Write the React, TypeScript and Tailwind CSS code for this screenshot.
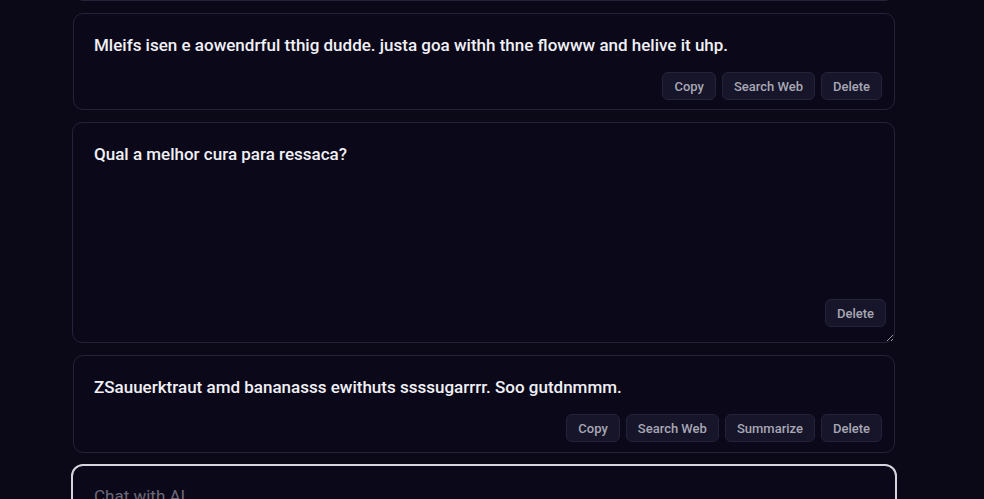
import React from 'react';

type Note = {
  text: string;
  actions: string[];
  tall?: boolean;
};

const notes: Note[] = [
  {
    text: 'Mleifs isen e aowendrful tthig dudde. justa goa withh thne flowww and helive it uhp.',
    actions: ['Copy', 'Search Web', 'Delete'],
  },
];

const ActionButton: React.FC<{ label: string }> = ({ label }) => (
  <button className="h-[28px] px-[11px] rounded-md bg-[#16152a] border border-[#252339] text-[13px] font-medium text-[#a8a7b4] leading-none">
    {label}
  </button>
);

const NoteCard: React.FC<Note> = ({ text, actions, tall }) => (
  <div
    className={
      'mx-px rounded-[10px] border border-[#25233a] bg-[#0b0919] pl-5 pr-3 pt-[17px] ' +
      (tall ? 'pb-[10px]' : 'pb-[9px]')
    }
  >
    <p className="text-[17px] font-medium leading-7 text-[#f1f0f7]">{text}</p>
    <div className="mt-[13px] flex justify-end gap-1.5">
      {actions.map((a) => (
        <ActionButton key={a} label={a} />
      ))}
    </div>
  </div>
);

export default function App() {
  return (
    <div
      className="h-[499px] w-[984px] overflow-hidden bg-[#0b0818]"
      style={{ fontFamily: 'Roboto, "Liberation Sans", sans-serif' }}
    >
      <div className="ml-[72px] w-[824px] flex flex-col gap-3 -mt-[86px]">
        {/* previous card, mostly scrolled out of view */}
        <div className="mx-px h-[87px] rounded-[10px] border border-[#25233a] bg-[#0b0919]" />

        {notes.map((n) => (
          <NoteCard key={n.text} {...n} />
        ))}

        <div className="relative">
          <textarea
            readOnly
            defaultValue="Qual a melhor cura para ressaca?"
            className="block h-[221px] w-[823px] resize-y rounded-[10px] border border-[#25233a] bg-[#0b0919] pl-[21px] pr-4 pt-[17px] text-[17px] font-medium leading-7 text-[#f1f0f7] outline-none"
          />
          <div className="absolute right-[10px] bottom-[16px]">
            <ActionButton label="Delete" />
          </div>
        </div>

        <NoteCard
          tall
          text="ZSauuerktraut amd bananasss ewithuts ssssugarrrr. Soo gutdnmmm."
          actions={['Copy', 'Search Web', 'Summarize', 'Delete']}
        />

        <div className="-mx-px -mt-px rounded-xl border-2 border-[#d6d5de] bg-[#0b0919] px-[21px] pt-[16px] pb-4">
          <input
            placeholder="Chat with AI"
            className="w-full bg-transparent text-[17px] leading-7 text-[#f1f0f7] placeholder:text-[#6b6979] outline-none"
          />
        </div>
      </div>
    </div>
  );
}
